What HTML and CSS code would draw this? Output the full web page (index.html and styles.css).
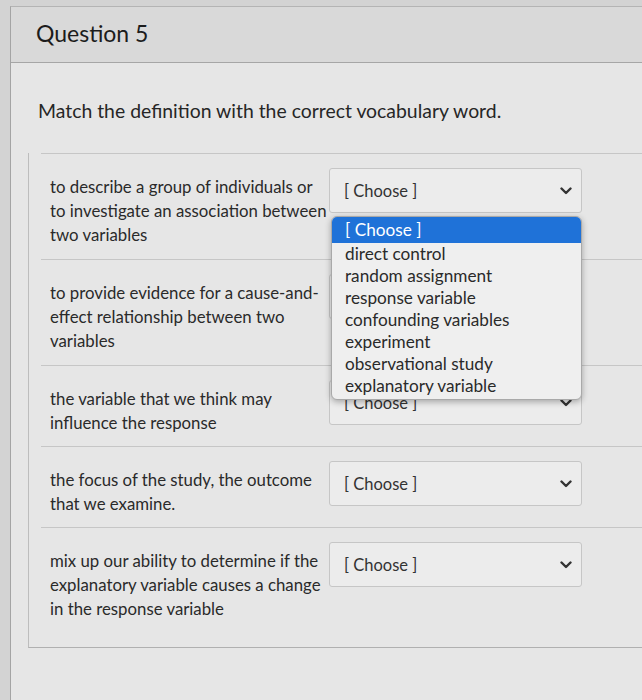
FILE: index.html
```html
<!DOCTYPE html>
<html lang="en">
<head>
<meta charset="utf-8">
<title>Question 5</title>
<link rel="stylesheet" href="styles.css">
</head>
<body>
<div class="frame">
  <div class="header"><h2 class="title">Question 5</h2></div>
  <div class="content">
    <p class="prompt">Match the definition with the correct vocabulary word.</p>
    <div class="answers">
      <div class="row r3">
        <div class="def">to describe a group of individuals or to investigate an association between two variables</div>
        <div class="select open">
          <span class="val">[ Choose ]</span>
          <svg class="chev" width="12" height="8" viewBox="0 0 12 8"><path d="M1.5 1.5 L6 6 L10.5 1.5" fill="none" stroke="#333" stroke-width="2.4" stroke-linecap="round" stroke-linejoin="round"/></svg>
          <ul class="menu">
            <li class="opt hl">[ Choose ]</li>
            <li class="opt">direct control</li>
            <li class="opt">random assignment</li>
            <li class="opt">response variable</li>
            <li class="opt">confounding variables</li>
            <li class="opt">experiment</li>
            <li class="opt">observational study</li>
            <li class="opt">explanatory variable</li>
          </ul>
        </div>
      </div>
      <div class="row r3">
        <div class="def">to provide evidence for a cause-and-effect relationship between two variables</div>
        <div class="select covered">
          <span class="val">[ Choose ]</span>
          <svg class="chev" width="12" height="8" viewBox="0 0 12 8"><path d="M1.5 1.5 L6 6 L10.5 1.5" fill="none" stroke="#333" stroke-width="2.4" stroke-linecap="round" stroke-linejoin="round"/></svg>
        </div>
      </div>
      <div class="row">
        <div class="def">the variable that we think may influence the response</div>
        <div class="select">
          <span class="val">[ Choose ]</span>
          <svg class="chev" width="12" height="8" viewBox="0 0 12 8"><path d="M1.5 1.5 L6 6 L10.5 1.5" fill="none" stroke="#333" stroke-width="2.4" stroke-linecap="round" stroke-linejoin="round"/></svg>
        </div>
      </div>
      <div class="row">
        <div class="def">the focus of the study, the outcome that we examine.</div>
        <div class="select">
          <span class="val">[ Choose ]</span>
          <svg class="chev" width="12" height="8" viewBox="0 0 12 8"><path d="M1.5 1.5 L6 6 L10.5 1.5" fill="none" stroke="#333" stroke-width="2.4" stroke-linecap="round" stroke-linejoin="round"/></svg>
        </div>
      </div>
      <div class="row r3">
        <div class="def">mix up our ability to determine if the explanatory variable causes a change in the response variable</div>
        <div class="select">
          <span class="val">[ Choose ]</span>
          <svg class="chev" width="12" height="8" viewBox="0 0 12 8"><path d="M1.5 1.5 L6 6 L10.5 1.5" fill="none" stroke="#333" stroke-width="2.4" stroke-linecap="round" stroke-linejoin="round"/></svg>
        </div>
      </div>
    </div>
  </div>
</div>
</body>
</html>
```

FILE: styles.css
```css
html, body {
  margin: 0;
  padding: 0;
  height: 100%;
}
body {
  background: #d3d3d3;
  font-family: Lato, "Noto Sans", sans-serif;
  color: #2a2a2a;
  overflow: hidden;
}
.frame {
  margin: 6px 0 0 10px;
  border-left: 1px solid #a4a4a4;
  border-top: 1px solid #b4b4b4;
  background: #e6e6e6;
  height: 720px;
}
.header {
  background: #d9d9d9;
  height: 55px;
  border-bottom: 1px solid #a6a6a6;
  padding-left: 25px;
  display: flex;
  align-items: center;
}
.title {
  margin: 0;
  font-size: 23px;
  font-weight: 400;
  color: #1c1c1c;
  padding-bottom: 4px;
}
.content {
  padding-left: 17px;
}
.prompt {
  margin: 35px 0 0 10px;
  font-size: 19.4px;
  line-height: 26px;
  color: #262626;
}
.answers {
  margin-top: 29px;
  border-left: 1px solid #bdbdbd;
  border-bottom: 1px solid #b0b0b0;
  padding-bottom: 14px;
}
.row {
  margin-left: 12px;
  border-top: 1px solid #c6c6c6;
  padding: 14px 0 11px 0;
  display: flex;
  align-items: flex-start;
}
.r3 {
  padding-bottom: 12px;
}
.def {
  width: 278px;
  padding: 7px 0 0 9px;
  font-size: 16.8px;
  line-height: 24px;
  color: #2a2a2a;
}
.select {
  position: relative;
  width: 253px;
  height: 45px;
  box-sizing: border-box;
  margin-left: 1px;
  border: 1px solid #c6c6c6;
  border-radius: 3px;
  background: #ececec;
  display: flex;
  align-items: center;
  justify-content: space-between;
  padding: 0 9px 0 14px;
}
.val {
  font-size: 16.5px;
  color: #333;
}
.covered .val {
  visibility: hidden;
}
.chev {
  display: block;
}
.menu {
  position: absolute;
  z-index: 5;
  top: 47px;
  left: 1px;
  width: 249px;
  margin: 0;
  padding: 0 0 2px 0;
  list-style: none;
  background: #efefef;
  border: 1px solid #a9a9a9;
  border-radius: 6px;
  box-shadow: 0 2px 6px rgba(0, 0, 0, 0.3);
  overflow: hidden;
}
.opt {
  font-size: 17.2px;
  line-height: 22px;
  padding-left: 13px;
  color: #2a2a2a;
}
.opt.hl {
  background: #1f72d8;
  color: #ffffff;
  line-height: 26px;
}
```
